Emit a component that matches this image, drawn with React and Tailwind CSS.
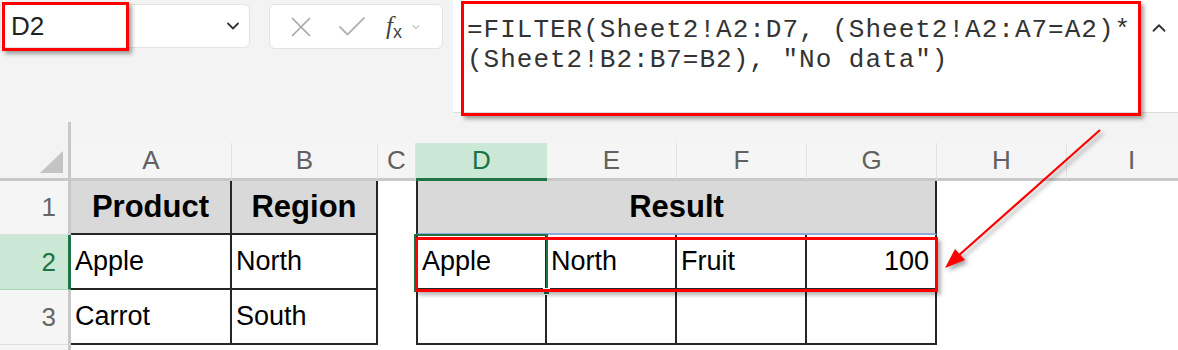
import { ChevronDown, ChevronUp, X, Check } from "lucide-react";

const cols = ["A", "B", "C", "D", "E", "F", "G", "H", "I"];

function RowHead({ n, active }) {
  return (
    <div
      className={
        "flex items-center justify-end pr-[12px] text-[26px] border-b " +
        (active
          ? "bg-[#cae8d5] text-[#1e7145] border-r-[3px] border-r-[#217346] border-b-[#a9d5b8]"
          : "bg-[#f5f5f5] text-[#666] border-r-[3px] border-r-[#c8c8c8] border-b-[#dedede]")
      }
    >
      {n}
    </div>
  );
}

function Cell({ children, head, className = "" }) {
  return (
    <div
      className={
        "flex items-center text-black " +
        (head ? "justify-center bg-[#d9d9d9] font-bold text-[31px] " : "bg-white text-[27px] ") +
        className
      }
    >
      {children}
    </div>
  );
}

export default function App() {
  return (
    <div className="relative w-[1178px] h-[350px] overflow-hidden bg-[#f3f3f3] font-['Liberation_Sans',Arial,sans-serif]">
      {/* formula bar */}
      <div className="flex h-[113px]">
        <div className="flex w-[453px] gap-[19px] pt-[4px]">
          <div className="flex items-center justify-between w-[250px] h-[44px] bg-white rounded-r-[6px] border border-[#e2e2e2] pl-[10px] pr-[6px]">
            <span className="text-[26px] text-[#222]">D2</span>
            <ChevronDown className="w-[20px] h-[20px] text-[#333]" strokeWidth={2.2} />
          </div>
          <div className="flex items-center w-[174px] h-[45px] bg-white rounded-[6px] border border-[#e2e2e2] pl-[14px]">
            <X className="w-[34px] h-[34px] text-[#a8a8a8]" strokeWidth={1.2} />
            <Check className="w-[36px] h-[36px] ml-[16px] text-[#b4b4b4]" strokeWidth={1.2} />
            <span className="ml-[16px] font-['Liberation_Serif',serif] italic text-[25px] text-[#444] leading-none">
              f<span className="text-[18px] not-italic font-['Liberation_Sans',sans-serif] align-[-4px]">x</span>
            </span>
            <ChevronDown className="w-[12px] h-[12px] ml-[8px] text-[#999]" strokeWidth={2} />
          </div>
        </div>
        <div className="flex flex-1 justify-between bg-white border-b border-[#dcdcdc] pl-[14px] pt-[15px] pr-[8px]">
          <div className="font-['Liberation_Mono',monospace] text-[26px] leading-[30px] tracking-[1px] text-[#333]">
            <div>=FILTER(Sheet2!A2:D7, (Sheet2!A2:A7=A2)*</div>
            <div>(Sheet2!B2:B7=B2), "No data")</div>
          </div>
          <ChevronUp className="w-[22px] h-[22px] text-[#333] mt-[2px]" strokeWidth={2} />
        </div>
      </div>

      {/* gap above column headers */}
      <div className="h-[30px] flex">
        <div className="w-[71px] mt-[9px] border-r-[3px] border-[#c8c8c8]" />
      </div>

      {/* sheet grid */}
      <div className="grid w-[1197px] grid-cols-[71px_161px_146px_38px_131px_130px_130px_130px_130px_130px] grid-rows-[38px_54px_55px_55px_20px]">
        <div className="flex items-end justify-end border-r-[3px] border-b-[3px] border-[#c8c8c8] pr-[5px] pb-[5px]">
          <svg width="23" height="22" viewBox="0 0 23 22">
            <path d="M23 0 L23 22 L0 22 Z" fill="#c4c4c4" />
          </svg>
        </div>
        {cols.map((c) => (
          <div
            key={c}
            className={
              "flex items-center justify-center text-[26px] border-b-[3px] " +
              (c === "D"
                ? "bg-[#cae8d5] text-[#1e7145] border-b-[#217346]"
                : "bg-[#f5f5f5] text-[#616161] border-r border-r-[#e2e2e2] border-b-[#c8c8c8]")
            }
          >
            {c}
          </div>
        ))}

        {/* row 1 */}
        <RowHead n="1" />
        <Cell head className="border-r-2 border-b-2 border-[#262626]">Product</Cell>
        <Cell head className="border-r-2 border-b-2 border-[#262626]">Region</Cell>
        <Cell />
        <Cell head className="col-span-4 border-x-2 border-[#262626] border-b-2 border-b-[#8eaadb]">Result</Cell>
        <Cell />
        <Cell />

        {/* row 2 */}
        <RowHead n="2" active />
        <Cell className="pl-[4px] border-r-2 border-b-2 border-[#262626]">Apple</Cell>
        <Cell className="pl-[4px] border-r-2 border-b-2 border-[#262626]">North</Cell>
        <Cell />
        <Cell className="pl-[4px] border-x-2 border-b-2 border-[#262626]">Apple</Cell>
        <Cell className="pl-[4px] border-r-2 border-b-2 border-[#262626]">North</Cell>
        <Cell className="pl-[4px] border-r-2 border-b-2 border-[#262626]">Fruit</Cell>
        <Cell className="justify-end pr-[6px] border-r-2 border-b-2 border-[#262626]">100</Cell>
        <Cell />
        <Cell />

        {/* row 3 */}
        <RowHead n="3" />
        <Cell className="pl-[4px] border-r-2 border-b-2 border-[#262626]">Carrot</Cell>
        <Cell className="pl-[4px] border-r-2 border-b-2 border-[#262626]">South</Cell>
        <Cell />
        <Cell className="border-x-2 border-b-2 border-[#262626]" />
        <Cell className="border-r-2 border-b-2 border-[#262626]" />
        <Cell className="border-r-2 border-b-2 border-[#262626]" />
        <Cell className="border-r-2 border-b-2 border-[#262626]" />
        <Cell />
        <Cell />

        <div className="bg-[#f5f5f5] border-r-[3px] border-[#c8c8c8]" />
        <div className="col-span-9 bg-white" />
      </div>

      {/* selection on D2 */}
      <div className="absolute left-[414px] top-[234px] w-[134px] h-[58px] border-2 border-[#217346]" />
      <div className="absolute left-[543px] top-[288px] w-[7px] h-[7px] bg-[#217346] border border-white" />

      {/* red annotation boxes */}
      <div className="absolute left-[2px] top-[2px] w-[127px] h-[49px] border-[3px] border-[#ff0000] shadow-[3px_3px_4px_rgba(0,0,0,0.35)]" />
      <div className="absolute left-[461px] top-[1px] w-[680px] h-[115px] border-[3px] border-[#ff0000] shadow-[3px_3px_4px_rgba(0,0,0,0.35)]" />
      <div className="absolute left-[415px] top-[237px] w-[523px] h-[55px] border-[3px] border-[#ff0000] shadow-[3px_3px_4px_rgba(0,0,0,0.3)]" />

      {/* arrow */}
      <svg className="absolute left-0 top-0 pointer-events-none" width="1178" height="350" style={{ filter: "drop-shadow(3px 3px 2px rgba(0,0,0,0.35))" }}>
        <line x1="1100" y1="130" x2="958" y2="256" stroke="#ff0000" strokeWidth="2.2" />
        <path d="M945 268 L965 260 L955 249 Z" fill="#ff0000" />
      </svg>
    </div>
  );
}
